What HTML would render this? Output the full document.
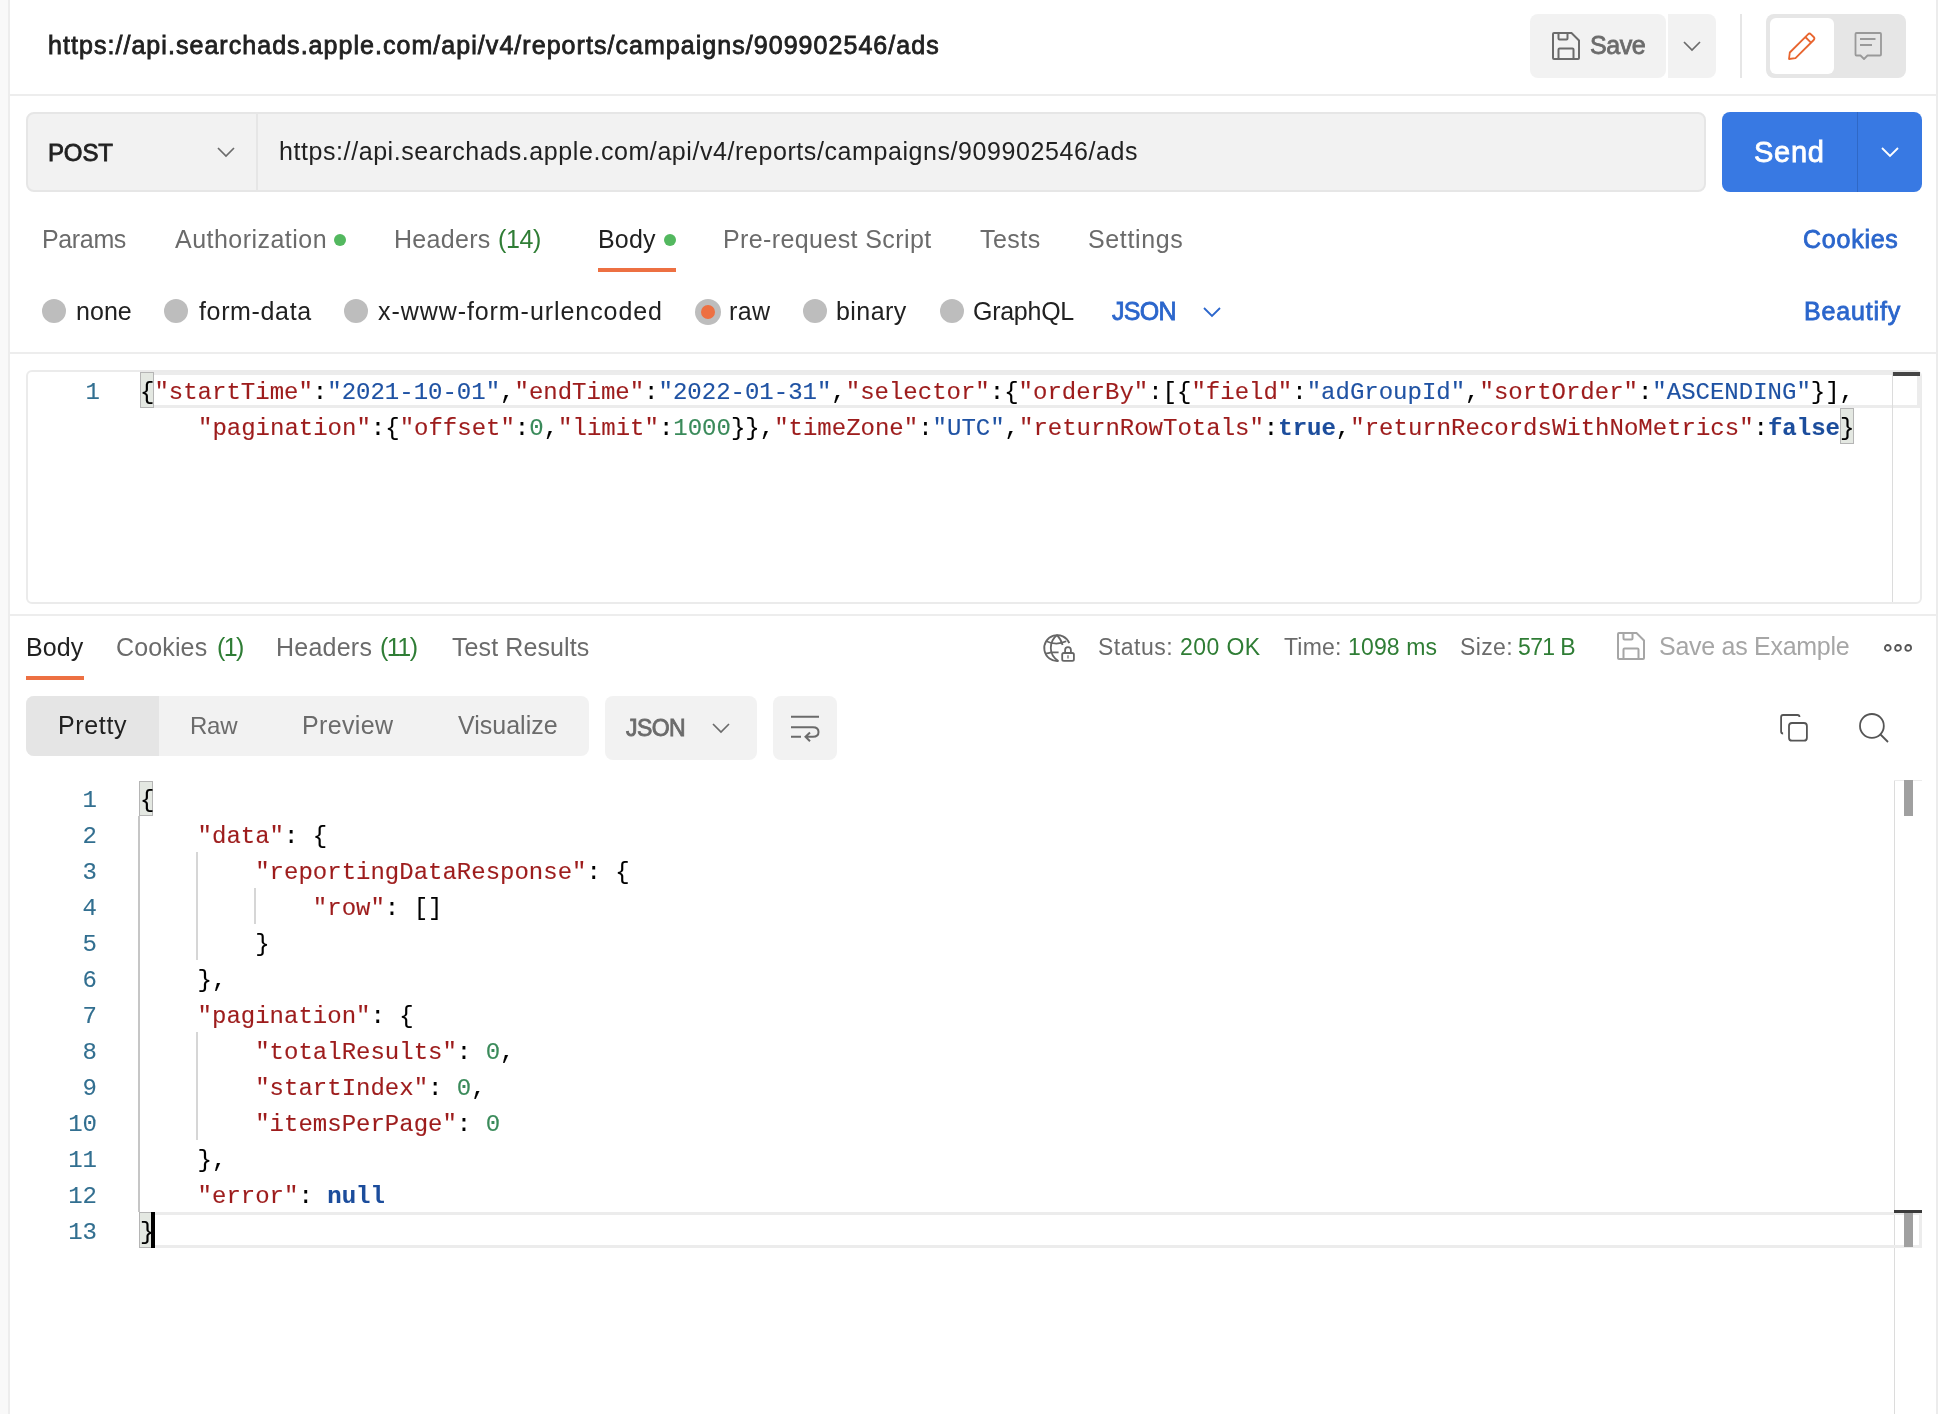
<!DOCTYPE html>
<html><head><meta charset="utf-8">
<style>
*{box-sizing:border-box;margin:0;padding:0}
html,body{width:1940px;height:1414px;overflow:hidden;background:#fff}
body{position:relative;font-family:"Liberation Sans",sans-serif;color:#212121}
.a{position:absolute}
.t{position:absolute;white-space:pre;line-height:1;will-change:transform}
svg{position:absolute;overflow:visible}
.g{color:#6b6b6b}
.gr{color:#2f7d35}
.bl{color:#2b66cc}
.code{position:absolute;font-family:"Liberation Mono",monospace;font-size:24px;line-height:36px;white-space:pre;color:#000;-webkit-text-stroke:0.12px currentColor;will-change:transform}
.k{color:#9d1c1c}
.s{color:#1f52a3}
.n{color:#3a8a5a}
.b{color:#1c4d9c;font-weight:700}
.ln{position:absolute;font-family:"Liberation Mono",monospace;font-size:24px;line-height:36px;color:#326f90;text-align:right;white-space:pre;-webkit-text-stroke:0.1px currentColor;will-change:transform}
.radio{position:absolute;width:24px;height:24px;border-radius:50%;background:#bdbdbd}
</style></head><body>
<!-- page frame -->
<div class="a" style="left:0;top:0;width:8px;height:1414px;background:#f9f9f9"></div>
<div class="a" style="left:8px;top:0;width:2px;height:1414px;background:#ededed"></div>
<div class="a" style="left:1936px;top:0;width:2px;height:1414px;background:#ececec"></div>
<div class="a" style="left:10px;top:94px;width:1926px;height:2px;background:#ededed"></div>

<!-- ===== top title bar ===== -->


<div class="a" style="left:1530px;top:14px;width:136px;height:64px;background:#f2f2f2;border-radius:8px"></div>
<div class="a" style="left:1668px;top:14px;width:48px;height:64px;background:#f2f2f2;border-radius:0 8px 8px 0"></div>
<svg style="left:1552px;top:32px" width="28" height="28" viewBox="0 0 28 28" fill="none" stroke="#6b6b6b" stroke-width="2">
  <path d="M1 2 Q1 1 2 1 L19.5 1 L27 8.5 L27 26 Q27 27 26 27 L2 27 Q1 27 1 26 Z"/>
  <path d="M6.5 1 L6.5 6.5 Q6.5 7.5 7.5 7.5 L14.5 7.5 Q15.5 7.5 15.5 6.5 L15.5 1"/>
  <path d="M6.5 27 L6.5 17.5 Q6.5 16.5 7.5 16.5 L20.5 16.5 Q21.5 16.5 21.5 17.5 L21.5 27"/>
</svg>

<svg style="left:1683px;top:41px" width="18" height="10" viewBox="0 0 18 10" fill="none" stroke="#6b6b6b" stroke-width="1.7"><path d="M1 1 L9 9 L17 1"/></svg>

<div class="a" style="left:1740px;top:14px;width:2px;height:64px;background:#e6e6e6"></div>
<div class="a" style="left:1766px;top:14px;width:140px;height:64px;background:#e6e6e6;border-radius:8px"></div>
<div class="a" style="left:1770px;top:18px;width:64px;height:56px;background:#fff;border-radius:6px"></div>
<svg style="left:1788px;top:32px" width="28" height="28" viewBox="0 0 28 28" fill="none" stroke="#e8652f" stroke-width="1.8" stroke-linejoin="round">
  <path d="M1 27 L1.8 20.5 L20 2.3 Q21.5 0.8 23 2.3 L25.7 5 Q27.2 6.5 25.7 8 L7.5 26.2 Z"/>
  <path d="M17.3 5 L23 10.7"/>
</svg>
<svg style="left:1854px;top:32px" width="28" height="28" viewBox="0 0 28 28" fill="none" stroke="#999" stroke-width="1.8" stroke-linejoin="round">
  <path d="M1.5 2 Q1.5 1 2.5 1 L26 1 Q27 1 27 2 L27 22.5 Q27 23.5 26 23.5 L13.5 23.5 L10 27 L6.5 23.5 L2.5 23.5 Q1.5 23.5 1.5 22.5 Z"/>
  <path d="M6 7 L21.5 7 M6 13 L18 13"/>
</svg>

<!-- ===== url row ===== -->
<div class="a" style="left:26px;top:112px;width:1680px;height:80px;background:#f2f2f2;border:2px solid #e6e6e6;border-radius:8px"></div>
<div class="a" style="left:256px;top:114px;width:2px;height:76px;background:#e6e6e6"></div>

<svg style="left:217px;top:147px" width="18" height="10" viewBox="0 0 18 10" fill="none" stroke="#6b6b6b" stroke-width="1.7"><path d="M1 1 L9 9 L17 1"/></svg>


<div class="a" style="left:1722px;top:112px;width:200px;height:80px;background:#3879e3;border-radius:8px"></div>
<div class="a" style="left:1857px;top:112px;width:1px;height:80px;background:#2f68c6"></div>

<svg style="left:1881px;top:147px" width="18" height="10" viewBox="0 0 18 10" fill="none" stroke="#fff" stroke-width="1.8"><path d="M1 1 L9 9 L17 1"/></svg>

<!-- ===== request tabs ===== -->


<div class="a" style="left:334px;top:234px;width:12px;height:12px;border-radius:50%;background:#53b85f"></div>


<div class="a" style="left:664px;top:234px;width:12px;height:12px;border-radius:50%;background:#53b85f"></div>
<div class="a" style="left:598px;top:268px;width:78px;height:4px;background:#ed7042"></div>





<!-- ===== body type radios ===== -->
<div class="radio" style="left:42px;top:299px"></div>

<div class="radio" style="left:164px;top:299px"></div>

<div class="radio" style="left:344px;top:299px"></div>

<div class="radio" style="left:695px;top:299px;width:26px;height:26px"></div>
<div class="a" style="left:701px;top:305px;width:14px;height:14px;border-radius:50%;background:#ed7042"></div>

<div class="radio" style="left:803px;top:299px"></div>

<div class="radio" style="left:940px;top:299px"></div>


<svg style="left:1203px;top:307px" width="18" height="10" viewBox="0 0 18 10" fill="none" stroke="#2b66cc" stroke-width="1.8"><path d="M1 1 L9 9 L17 1"/></svg>

<div class="a" style="left:10px;top:352px;width:1926px;height:2px;background:#ededed"></div>


<!-- ===== request editor ===== -->
<div class="a" style="left:26px;top:370px;width:1896px;height:234px;border:2px solid #ebebeb;border-radius:6px"></div>
<div class="a" style="left:154px;top:372px;width:1738px;height:36px;border-top:3.5px solid #ececec;border-bottom:3.5px solid #ececec"></div>
<div class="a" style="left:1893px;top:372px;width:28px;height:36px;border:3.5px solid #ececec;border-left:none;border-right-width:4px"></div>
<div class="a" style="left:140px;top:372px;width:14px;height:36px;background:#e4e8e2;border:1.5px solid #b5b5b5"></div>
<div class="a" style="left:1840px;top:408px;width:14px;height:36px;background:#e4e8e2;border:1.5px solid #b5b5b5"></div>
<div class="ln" style="left:39px;top:375px;width:61px">1</div>
<div class="code" style="left:140px;top:375px"><span>{</span><span class="k">"startTime"</span>:<span class="s">"2021-10-01"</span>,<span class="k">"endTime"</span>:<span class="s">"2022-01-31"</span>,<span class="k">"selector"</span>:{<span class="k">"orderBy"</span>:[{<span class="k">"field"</span>:<span class="s">"adGroupId"</span>,<span class="k">"sortOrder"</span>:<span class="s">"ASCENDING"</span>}],</div>
<div class="code" style="left:197.6px;top:411px"><span class="k">"pagination"</span>:{<span class="k">"offset"</span>:<span class="n">0</span>,<span class="k">"limit"</span>:<span class="n">1000</span>}},<span class="k">"timeZone"</span>:<span class="s">"UTC"</span>,<span class="k">"returnRowTotals"</span>:<span class="b">true</span>,<span class="k">"returnRecordsWithNoMetrics"</span>:<span class="b">false</span>}</div>
<div class="a" style="left:1892px;top:372px;width:1px;height:230px;background:#dcdcdc"></div>
<div class="a" style="left:1893px;top:372.3px;width:27px;height:3.4px;background:#454545"></div>
<div class="a" style="left:10px;top:614px;width:1926px;height:2px;background:#ededed"></div>

<!-- ===== response tabs ===== -->

<div class="a" style="left:26px;top:676px;width:58px;height:4px;background:#ed7042"></div>




<svg style="left:1038px;top:630px" width="42" height="36" viewBox="0 0 42 36" fill="none" stroke="#666" stroke-width="1.8">
  <path d="M20.5 31 A13 13 0 1 1 31.3 13.2"/>
  <path d="M19 5 Q12.8 10 12.8 18 Q12.8 26 20.3 31"/>
  <path d="M19 5 Q22.5 8.5 24.6 15"/>
  <path d="M8.3 11.3 Q18.5 15.8 28.2 11.3"/>
  <path d="M7.3 23.6 Q10.5 23.4 13.3 22.4 L20.6 22.4"/>
  <rect x="24.2" y="23" width="11.7" height="7.8" rx="1.6"/>
  <path d="M27.1 23 L27.1 20.1 A2.9 2.9 0 0 1 32.9 20.1 L32.9 23"/>
  <path d="M30 25.3 L30 28.6" stroke-width="1.3"/>
</svg>



<svg style="left:1617px;top:632px" width="28" height="28" viewBox="0 0 28 28" fill="none" stroke="#a6a6a6" stroke-width="2">
  <path d="M1 2 Q1 1 2 1 L19.5 1 L27 8.5 L27 26 Q27 27 26 27 L2 27 Q1 27 1 26 Z"/>
  <path d="M6.5 1 L6.5 6.5 Q6.5 7.5 7.5 7.5 L14.5 7.5 Q15.5 7.5 15.5 6.5 L15.5 1"/>
  <path d="M6.5 27 L6.5 17.5 Q6.5 16.5 7.5 16.5 L20.5 16.5 Q21.5 16.5 21.5 17.5 L21.5 27"/>
</svg>

<svg style="left:1884px;top:644px" width="29" height="8" viewBox="0 0 29 8" fill="none" stroke="#555" stroke-width="1.8">
  <circle cx="3.8" cy="3.9" r="2.9"/><circle cx="14" cy="3.9" r="2.9"/><circle cx="24.2" cy="3.9" r="2.9"/>
</svg>

<!-- ===== response toolbar ===== -->
<div class="a" style="left:26px;top:696px;width:563px;height:60px;background:#f2f2f2;border-radius:8px"></div>
<div class="a" style="left:26px;top:696px;width:133px;height:60px;background:#e5e5e5;border-radius:8px 0 0 8px"></div>




<div class="a" style="left:605px;top:696px;width:152px;height:64px;background:#f2f2f2;border-radius:8px"></div>

<svg style="left:712px;top:723px" width="18" height="10" viewBox="0 0 18 10" fill="none" stroke="#6b6b6b" stroke-width="1.7"><path d="M1 1 L9 9 L17 1"/></svg>
<div class="a" style="left:773px;top:696px;width:64px;height:64px;background:#f2f2f2;border-radius:8px"></div>
<svg style="left:790px;top:714px" width="30" height="30" viewBox="0 0 30 30" fill="none" stroke="#6b6b6b" stroke-width="2">
  <path d="M1 2.8 L29 2.8 M1 13.2 L23 13.2 Q28.5 13.2 28.5 18 Q28.5 22.8 23 22.8 L16 22.8 M20 18.5 L15.5 22.8 L20 27.2 M1 22.8 L11 22.8"/>
</svg>
<svg style="left:1780px;top:714px" width="30" height="30" viewBox="0 0 30 30" fill="none" stroke="#555" stroke-width="1.8">
  <path d="M3.1 19.5 Q1.1 19.5 1.1 17.5 L1.1 3 Q1.1 1 3.1 1 L17.5 1 Q19.5 1 19.5 3"/>
  <rect x="9" y="9" width="17.9" height="17.7" rx="3"/>
</svg>
<svg style="left:1859px;top:713px" width="30" height="30" viewBox="0 0 30 30" fill="none" stroke="#555" stroke-width="1.8">
  <circle cx="12.9" cy="12.9" r="11.9"/><path d="M21.5 21.5 L29 29"/>
</svg>

<!-- ===== response editor ===== -->
<div class="a" style="left:151px;top:1212px;width:1743px;height:36px;border-top:3.5px solid #ececec;border-bottom:3.5px solid #ececec"></div>
<div class="a" style="left:139px;top:781px;width:14px;height:35px;background:#e4e8e2;border:1.5px solid #b5b5b5"></div>
<div class="a" style="left:139px;top:1212px;width:14px;height:36px;background:#e4e8e2;border:1.5px solid #b5b5b5"></div>
<div class="a" style="left:151px;top:1212px;width:4px;height:36px;background:#000"></div>
<div class="a" style="left:138px;top:816px;width:2px;height:396px;background:#c6c6c6"></div>
<div class="a" style="left:196px;top:852px;width:2px;height:108px;background:#d6d6d6"></div>
<div class="a" style="left:254px;top:888px;width:2px;height:36px;background:#d6d6d6"></div>
<div class="a" style="left:196px;top:1032px;width:2px;height:108px;background:#d6d6d6"></div>
<div class="ln" style="left:19px;top:783px;width:78px">1
2
3
4
5
6
7
8
9
10
11
12
13</div>
<div class="code" style="left:140px;top:783px">{
    <span class="k">"data"</span>: {
        <span class="k">"reportingDataResponse"</span>: {
            <span class="k">"row"</span>: []
        }
    },
    <span class="k">"pagination"</span>: {
        <span class="k">"totalResults"</span>: <span class="n">0</span>,
        <span class="k">"startIndex"</span>: <span class="n">0</span>,
        <span class="k">"itemsPerPage"</span>: <span class="n">0</span>
    },
    <span class="k">"error"</span>: <span class="b">null</span>
}</div>
<div class="a" style="left:1894px;top:780px;width:1px;height:634px;background:#dcdcdc"></div>
<div class="a" style="left:1894px;top:780px;width:28px;height:1px;background:#ececec"></div>
<div class="a" style="left:1904px;top:780px;width:9px;height:36px;background:#a0a0a0"></div>
<div class="a" style="left:1894px;top:1212px;width:28px;height:36px;border:3.5px solid #ececec;border-left:none;border-right-width:3px"></div>
<div class="a" style="left:1894px;top:1210px;width:28px;height:3px;background:#3a3a3a"></div>
<div class="a" style="left:1904px;top:1213px;width:9px;height:34px;background:#a0a0a0"></div>

<div class="t" id="title" style="left:47.84px;top:32.64px;font-size:25px;-webkit-text-stroke-width:0.8px;letter-spacing:1.045px;">https://api.searchads.apple.com/api/v4/reports/campaigns/909902546/ads</div>
<div class="t g" id="save" style="left:1590.12px;top:32.64px;font-size:25px;-webkit-text-stroke-width:0.8px;letter-spacing:-0.446px;">Save</div>
<div class="t" id="post" style="left:47.50px;top:140.68px;font-size:24px;-webkit-text-stroke-width:0.8px;letter-spacing:-0.144px;">POST</div>
<div class="t" id="url" style="left:278.63px;top:139.14px;font-size:25px;letter-spacing:0.577px;">https://api.searchads.apple.com/api/v4/reports/campaigns/909902546/ads</div>
<div class="t" id="send" style="left:1753.50px;top:137.95px;font-size:29px;-webkit-text-stroke-width:0.8px;letter-spacing:0.738px;color:#fff;">Send</div>
<div class="t g" id="params" style="left:41.50px;top:226.94px;font-size:25px;letter-spacing:-0.358px;">Params</div>
<div class="t g" id="auth" style="left:175.07px;top:226.94px;font-size:25px;letter-spacing:0.471px;">Authorization</div>
<div class="t g" id="hdr" style="left:393.80px;top:226.94px;font-size:25px;letter-spacing:0.294px;">Headers</div>
<div class="t gr" id="hdrn" style="left:497.92px;top:226.94px;font-size:25px;letter-spacing:-0.414px;">(14)</div>
<div class="t" id="body" style="left:597.90px;top:226.94px;font-size:25px;letter-spacing:0.160px;">Body</div>
<div class="t g" id="prereq" style="left:722.50px;top:226.94px;font-size:25px;letter-spacing:0.392px;">Pre-request Script</div>
<div class="t g" id="tests" style="left:980.29px;top:226.94px;font-size:25px;letter-spacing:0.469px;">Tests</div>
<div class="t g" id="settings" style="left:1088.43px;top:226.94px;font-size:25px;letter-spacing:0.635px;">Settings</div>
<div class="t bl" id="cookies" style="left:1802.50px;top:226.94px;font-size:25px;-webkit-text-stroke-width:0.8px;letter-spacing:0.759px;">Cookies</div>
<div class="t" id="none" style="left:76.34px;top:298.74px;font-size:25px;letter-spacing:0.043px;">none</div>
<div class="t" id="formdata" style="left:198.59px;top:298.74px;font-size:25px;letter-spacing:0.648px;">form-data</div>
<div class="t" id="xwww" style="left:378.46px;top:298.74px;font-size:25px;letter-spacing:0.931px;">x-www-form-urlencoded</div>
<div class="t" id="raw" style="left:728.83px;top:298.64px;font-size:25px;letter-spacing:0.345px;">raw</div>
<div class="t" id="binary" style="left:835.69px;top:298.74px;font-size:25px;letter-spacing:0.453px;">binary</div>
<div class="t" id="graphql" style="left:973.13px;top:298.74px;font-size:25px;letter-spacing:-0.268px;">GraphQL</div>
<div class="t bl" id="jsonb" style="left:1111.50px;top:298.74px;font-size:25px;-webkit-text-stroke-width:0.8px;letter-spacing:-0.667px;">JSON</div>
<div class="t bl" id="beautify" style="left:1804.20px;top:298.74px;font-size:25px;-webkit-text-stroke-width:0.8px;letter-spacing:0.852px;">Beautify</div>
<div class="t" id="rbody" style="left:25.50px;top:634.84px;font-size:25px;letter-spacing:0.093px;">Body</div>
<div class="t g" id="rcook" style="left:116.43px;top:634.84px;font-size:25px;letter-spacing:0.139px;">Cookies</div>
<div class="t gr" id="rcookn" style="left:216.52px;top:634.84px;font-size:25px;letter-spacing:-1.621px;">(1)</div>
<div class="t g" id="rhdr" style="left:275.90px;top:634.84px;font-size:25px;letter-spacing:0.233px;">Headers</div>
<div class="t gr" id="rhdrn" style="left:380.02px;top:634.84px;font-size:25px;letter-spacing:-1.521px;">(11)</div>
<div class="t g" id="testres" style="left:451.79px;top:634.84px;font-size:25px;letter-spacing:0.100px;">Test Results</div>
<div class="t g" id="status" style="left:1098.45px;top:636.43px;font-size:23px;letter-spacing:0.496px;">Status:</div>
<div class="t gr" id="statusv" style="left:1179.50px;top:636.43px;font-size:23px;letter-spacing:0.423px;">200 OK</div>
<div class="t g" id="time" style="left:1284.37px;top:636.43px;font-size:23px;letter-spacing:0.170px;">Time:</div>
<div class="t gr" id="timev" style="left:1347.73px;top:636.43px;font-size:23px;letter-spacing:0.146px;">1098 ms</div>
<div class="t g" id="size" style="left:1459.75px;top:636.43px;font-size:23px;letter-spacing:0.379px;">Size:</div>
<div class="t gr" id="sizev" style="left:1518.40px;top:636.43px;font-size:23px;letter-spacing:-0.614px;">571 B</div>
<div class="t" id="saveex" style="left:1659.43px;top:633.54px;font-size:25px;letter-spacing:-0.282px;color:#a6a6a6;">Save as Example</div>
<div class="t" id="pretty" style="left:57.90px;top:712.74px;font-size:25px;letter-spacing:0.643px;">Pretty</div>
<div class="t g" id="rraw" style="left:189.50px;top:713.58px;font-size:24px;letter-spacing:-0.223px;">Raw</div>
<div class="t g" id="preview" style="left:301.80px;top:712.74px;font-size:25px;letter-spacing:0.342px;">Preview</div>
<div class="t g" id="visualize" style="left:457.79px;top:712.74px;font-size:25px;letter-spacing:-0.002px;">Visualize</div>
<div class="t g" id="jsonr" style="left:625.80px;top:716.53px;font-size:23px;-webkit-text-stroke-width:0.8px;letter-spacing:-0.578px;">JSON</div>
</body></html>
